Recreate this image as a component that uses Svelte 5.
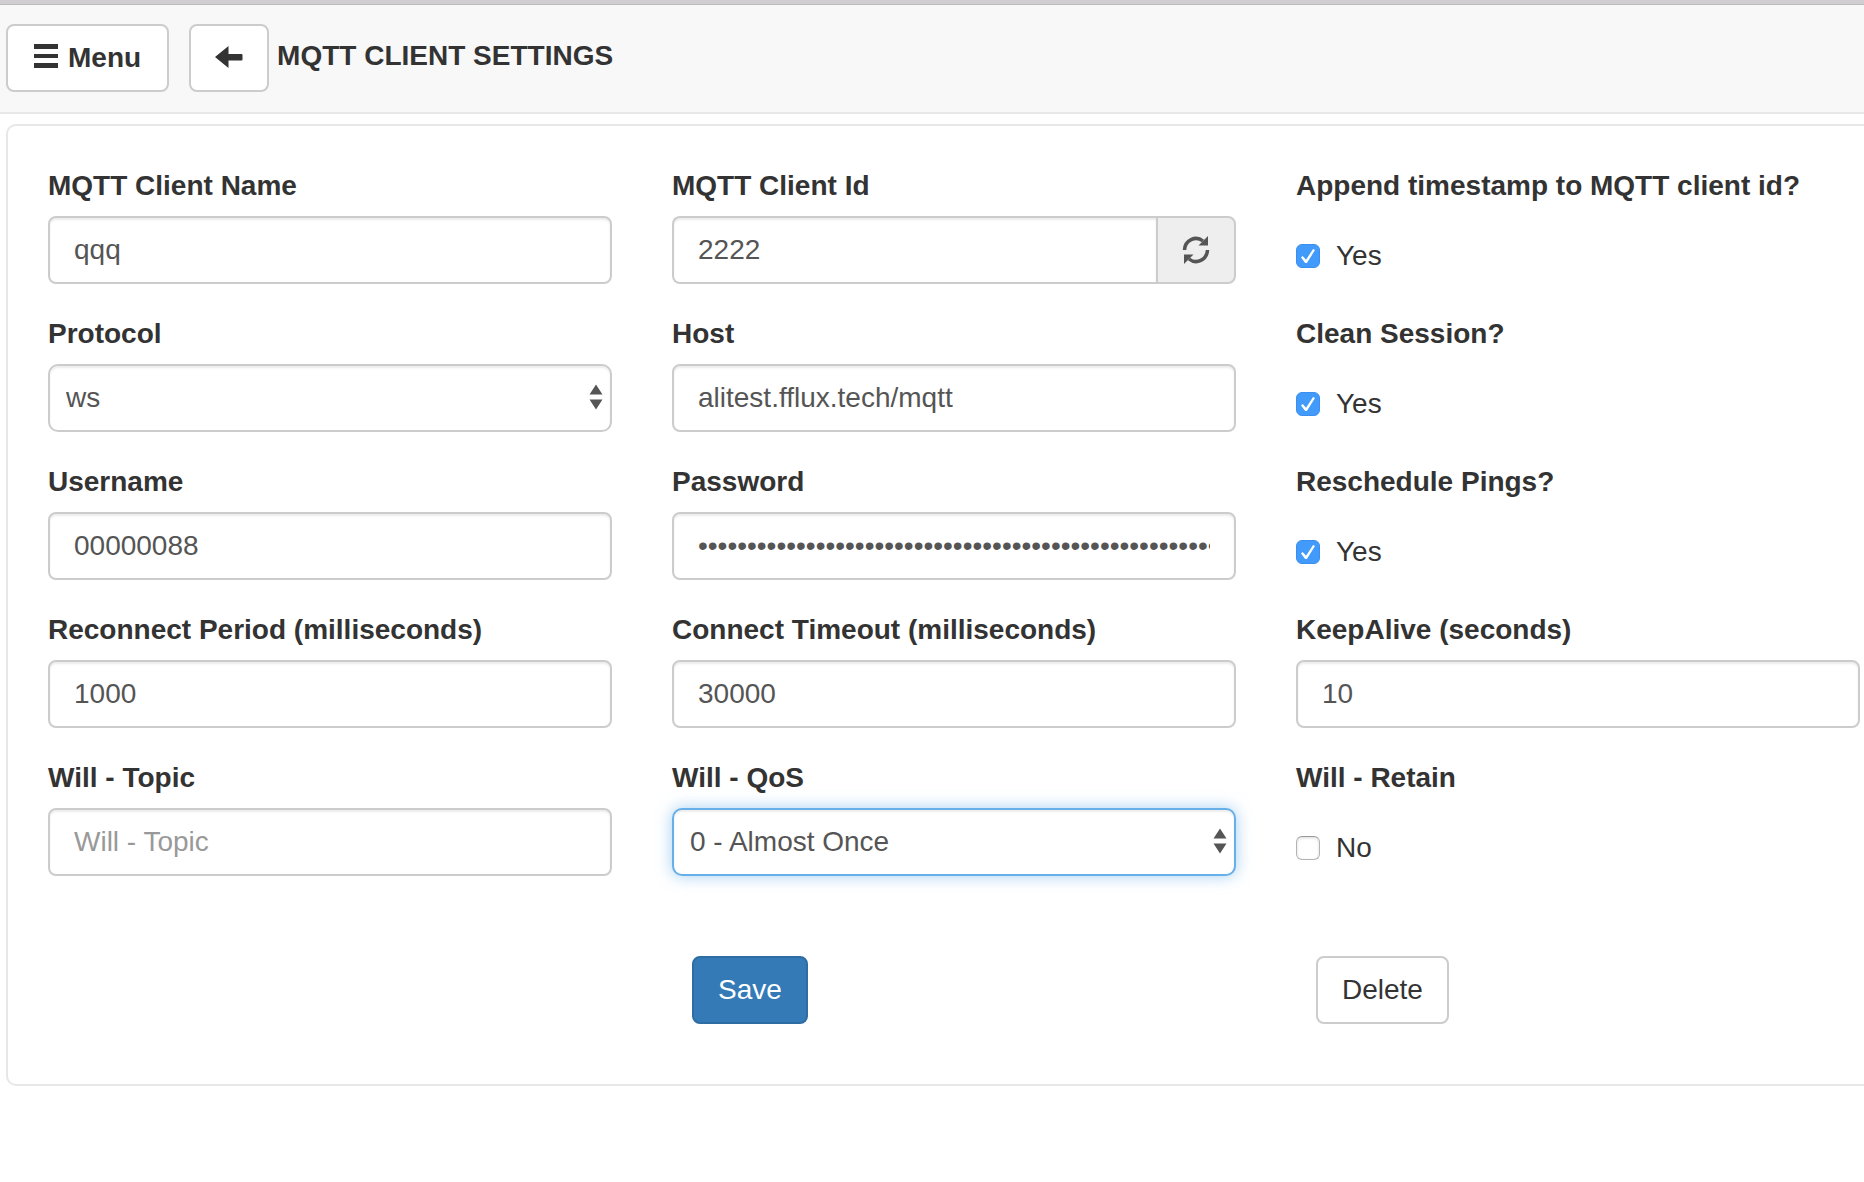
<script lang="ts">
  interface Field {
    id: string;
    label: string;
    type: 'text' | 'password' | 'number' | 'select' | 'check' | 'refresh';
    value?: string;
    checked?: boolean;
    options?: string[];
  }

  let fields = $state<Field[]>([
    { id: 'name', label: 'MQTT Client Name', type: 'text', value: 'qqq' },
    { id: 'clientId', label: 'MQTT Client Id', type: 'refresh', value: '2222' },
    { id: 'appendTimestamp', label: 'Append timestamp to MQTT client id?', type: 'check', checked: true },
    { id: 'protocol', label: 'Protocol', type: 'select', value: 'ws', options: ['ws', 'wss', 'mqtt'] },
    { id: 'host', label: 'Host', type: 'text', value: 'alitest.fflux.tech/mqtt' },
    { id: 'clean', label: 'Clean Session?', type: 'check', checked: true },
    { id: 'username', label: 'Username', type: 'text', value: '00000088' },
    { id: 'password', label: 'Password', type: 'password', value: 'x'.repeat(64) },
    { id: 'reschedule', label: 'Reschedule Pings?', type: 'check', checked: true },
    { id: 'reconnect', label: 'Reconnect Period (milliseconds)', type: 'number', value: '1000' },
    { id: 'timeout', label: 'Connect Timeout (milliseconds)', type: 'number', value: '30000' },
    { id: 'keepAlive', label: 'KeepAlive (seconds)', type: 'number', value: '10' },
    { id: 'willTopic', label: 'Will - Topic', type: 'text', value: '' },
    {
      id: 'willQos', label: 'Will - QoS', type: 'select', value: '0 - Almost Once',
      options: ['0 - Almost Once', '1 - Atleast Once', '2 - Exactly Once'],
    },
    { id: 'willRetain', label: 'Will - Retain', type: 'check', checked: false },
  ]);

  let activeId = $state('willQos');

  function newClientId() {
    const f = fields.find((f) => f.id === 'clientId');
    if (f) f.value = String(Math.floor(1000 + Math.random() * 9000));
  }
</script>

<header class="navbar">
  <button type="button" class="btn btn-menu">
    <svg width="24" height="28" viewBox="0 0 24 28" aria-hidden="true">
      <path d="M0 0h24v5H0zM0 10h24v4H0zM0 19h24v5H0z" fill="currentColor" />
    </svg>
    Menu
  </button>
  <button type="button" class="btn btn-back" aria-label="Back">
    <svg width="28" height="24" viewBox="0 0 28 24" aria-hidden="true">
      <path d="M0 11L13.500 0v8H26.500q1 0 1 1v4.500q0 1-1 1H13.500V22z" fill="currentColor" />
    </svg>
  </button>
  <h1>MQTT CLIENT SETTINGS</h1>
</header>

<form class="panel" onsubmit={(e) => e.preventDefault()}>
  <div class="grid">
    {#each fields as field (field.id)}
      <div class="group">
        <label class="title" for={field.id}>{field.label}</label>
        {#if field.type === 'check'}
          <div class="check">
            <input id={field.id} type="checkbox" bind:checked={field.checked} />
            <label for={field.id}>{field.checked ? 'Yes' : 'No'}</label>
          </div>
        {:else if field.type === 'select'}
          <div class="select">
            <select
              id={field.id}
              class="control"
              class:active={activeId === field.id}
              bind:value={field.value}
              onfocus={() => (activeId = field.id)}
              onblur={() => (activeId = '')}
            >
              {#each field.options ?? [] as opt}
                <option value={opt}>{opt}</option>
              {/each}
            </select>
            <svg class="arrows" width="14" height="26" viewBox="0 0 14 26" aria-hidden="true">
              <path d="M0.500 10.500L7 0.500l6.500 10zM0.500 15.500L7 25.500l6.500-10z" fill="#555" />
            </svg>
          </div>
        {:else if field.type === 'refresh'}
          <div class="input-group">
            <input id={field.id} class="control" type="text" bind:value={field.value} />
            <button type="button" class="addon" aria-label="Generate client id" onclick={newClientId}>
              <svg width="28" height="28" viewBox="0 0 28 28" aria-hidden="true">
                <path d="M2.500 14A11.500 12 0 0 1 21 5" fill="none" stroke="currentColor" stroke-width="3.500" />
                <path d="M26 0v9.500H16.500z" fill="currentColor" />
                <path d="M25.500 14A11.500 12 0 0 1 7 23" fill="none" stroke="currentColor" stroke-width="3.500" />
                <path d="M2 28V18.500h9.500z" fill="currentColor" />
              </svg>
            </button>
          </div>
        {:else}
          <input
            id={field.id}
            class="control"
            type={field.type === 'password' ? 'password' : 'text'}
            inputmode={field.type === 'number' ? 'numeric' : undefined}
            placeholder={field.label}
            bind:value={field.value}
          />
        {/if}
      </div>
    {/each}
  </div>

  <div class="grid actions">
    <div class="action save"><button type="submit" class="btn btn-primary">Save</button></div>
    <div class="action"><button type="button" class="btn">Delete</button></div>
  </div>
</form>

<style>
  :global(body) {
    background: #fff;
    color: #333;
    font-family: "Helvetica Neue", Helvetica, "Liberation Sans", Arial, sans-serif;
    font-size: 28px;
    line-height: 40px;
  }

  .navbar {
    display: flex;
    align-items: flex-start;
    padding: 20px 6px;
    border-top: 4px solid #d0ced1;
    border-bottom: 2px solid #e7e7e7;
    background: #f8f8f8;
    box-shadow: inset 0 1px 0 #bbb;
  }
  h1 { margin: 0 0 0 8px; font-size: 28px; font-weight: 700; line-height: 64px; }

  .btn {
    box-sizing: border-box;
    display: inline-flex;
    align-items: center;
    padding: 12px 24px;
    border: 2px solid #ccc;
    border-radius: 8px;
    background: #fff;
    color: #333;
    font: inherit;
    cursor: pointer;
  }
  .btn-menu { gap: 10px; margin-right: 20px; padding: 12px 26px; font-weight: 700; }
  .btn-back { height: 68px; }
  .btn-primary { border-color: #2e6da4; background: #337ab7; color: #fff; }

  .panel {
    margin: 10px 0 0 6px;
    padding: 40px 4px 60px 40px;
    border: 2px solid #e7e7e7;
    border-right: 0;
    border-radius: 10px 0 0 10px;
  }
  .grid { display: grid; grid-template-columns: repeat(3, minmax(0, 1fr)); gap: 30px 60px; }
  .title { display: block; margin-bottom: 10px; font-weight: 700; }

  .control {
    box-sizing: border-box;
    display: block;
    width: 100%;
    height: 68px;
    margin: 0;
    padding: 12px 24px;
    border: 2px solid #ccc;
    border-radius: 8px;
    outline: 0;
    background: #fff;
    box-shadow: inset 0 2px 2px rgba(0, 0, 0, 0.075);
    color: #555;
    font: inherit;
  }
  .control::placeholder { color: #999; opacity: 1; }
  .control:focus, .control.active {
    border-color: #66afe9;
    box-shadow: inset 0 2px 2px rgba(0, 0, 0, 0.075), 0 0 16px rgba(102, 175, 233, 0.6);
  }

  .select { position: relative; }
  select.control { appearance: none; padding: 0 40px 0 16px; border-radius: 10px; }
  .arrows { position: absolute; top: 20px; right: 9px; pointer-events: none; }

  .input-group { display: flex; }
  .input-group .control { flex: 1; min-width: 0; border-right: 0; border-radius: 8px 0 0 8px; }
  .addon {
    display: flex;
    align-items: center;
    padding: 0 24px;
    border: 2px solid #ccc;
    border-radius: 0 8px 8px 0;
    background: #eee;
    color: #555;
  }

  .check { display: flex; align-items: center; gap: 16px; margin-top: 30px; height: 40px; }
  .check input {
    appearance: none;
    display: grid;
    place-items: center;
    width: 24px;
    height: 24px;
    margin: 0;
    border: 1px solid #b4b4b4;
    border-top-color: #999;
    border-radius: 6px;
    background: #fff;
    box-shadow: inset 0 1px 3px rgba(0, 0, 0, 0.15);
  }
  .check input:checked { border-color: #3b8ff0; background: #429bfa; box-shadow: none; }
  .check input:checked::before {
    content: "";
    width: 14px;
    height: 14px;
    background: #fff;
    clip-path: polygon(0 60%, 12% 50%, 36% 76%, 86% 0, 100% 8%, 42% 100%, 30% 100%);
  }

  .actions { margin-top: 80px; }
  .action { padding-left: 20px; }
  .save { grid-column: 2; }
</style>
